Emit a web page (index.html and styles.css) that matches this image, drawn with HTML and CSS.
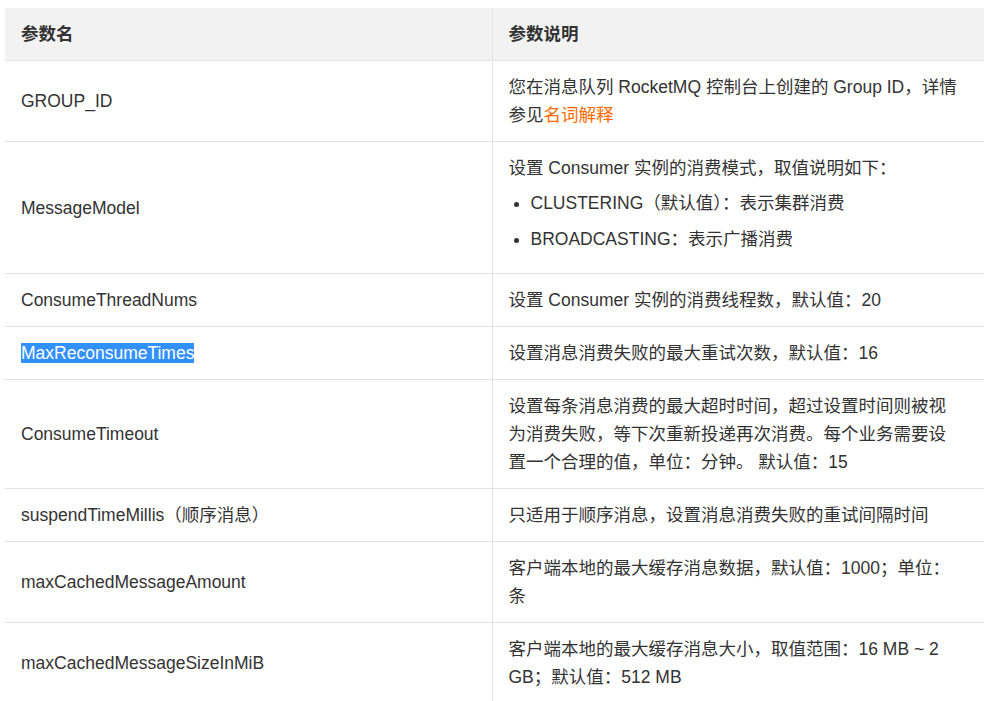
FILE: index.html
```html
<!DOCTYPE html>
<html lang="zh-CN">
<head>
<meta charset="utf-8">
<title>参数说明</title>
<link rel="stylesheet" href="styles.css">
</head>
<body>
<table class="params">
  <colgroup><col class="c-name"><col class="c-desc"></colgroup>
  <thead>
    <tr><th>参数名</th><th>参数说明</th></tr>
  </thead>
  <tbody>
    <tr><td>GROUP_ID</td><td>您在消息队列 RocketMQ 控制台上创建的 Group ID，详情参见<a class="link" href="#">名词解释</a></td></tr>
    <tr><td>MessageModel</td><td><p class="lead">设置 Consumer 实例的消费模式，取值说明如下：</p>
      <ul class="opts"><li>CLUSTERING（默认值）：表示集群消费</li><li>BROADCASTING：表示广播消费</li></ul></td></tr>
    <tr><td>ConsumeThreadNums</td><td>设置 Consumer 实例的消费线程数，默认值：20</td></tr>
    <tr><td><span class="sel">MaxReconsumeTimes</span></td><td>设置消息消费失败的最大重试次数，默认值：16</td></tr>
    <tr><td>ConsumeTimeout</td><td>设置每条消息消费的最大超时时间，超过设置时间则被视为消费失败，等下次重新投递再次消费。每个业务需要设置一个合理的值，单位：分钟。 默认值：15</td></tr>
    <tr><td>suspendTimeMillis（顺序消息）</td><td>只适用于顺序消息，设置消息消费失败的重试间隔时间</td></tr>
    <tr><td>maxCachedMessageAmount</td><td>客户端本地的最大缓存消息数据，默认值：1000；单位：条</td></tr>
    <tr><td>maxCachedMessageSizeInMiB</td><td>客户端本地的最大缓存消息大小，取值范围：16 MB ~ 2 GB；默认值：512 MB</td></tr>
  </tbody>
</table>
</body>
</html>
```
FILE: styles.css
```css
html, body {
  margin: 0;
  padding: 0;
  overflow: hidden;
  background: #fff;
}
body {
  padding: 8px 0 0 5px;
  font-family: "Liberation Sans", Arial, "Noto Sans CJK SC", sans-serif;
  font-size: 17.5px;
  line-height: 28px;
  color: #333;
}
.params {
  border-collapse: collapse;
  table-layout: fixed;
  width: 985px;
}
.c-name { width: 487px; }
.c-desc { width: 498px; }
.params th,
.params td {
  padding: 12px 16px;
  text-align: left;
  vertical-align: middle;
  border-bottom: 1px solid #e3e3e3;
}
.params th + th,
.params td + td {
  border-left: 1px solid #e3e3e3;
  padding-right: 31px;
}
.params th {
  background: #f2f2f2;
  font-weight: bold;
}
.lead { margin: 0; }
.opts {
  margin: 7px 0 8px;
  padding-left: 22px;
  list-style: disc;
}
.opts li + li { margin-top: 8px; }
.link {
  color: #ff6a00;
  text-decoration: none;
}
.sel {
  background: #3390ff;
  color: #fff;
}
```
